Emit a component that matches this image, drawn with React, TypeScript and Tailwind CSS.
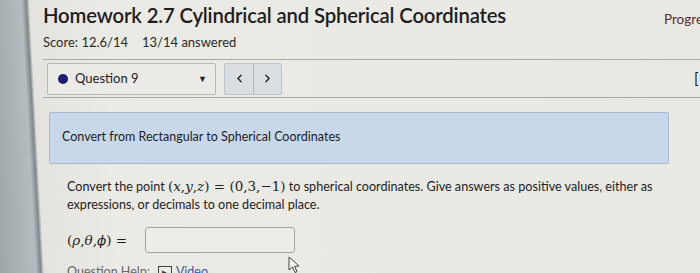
import { ChevronLeft, ChevronRight } from 'lucide-react';

export default function App() {
  return (
    <div className="w-[700px] h-[273px] overflow-hidden bg-[linear-gradient(86.9deg,#9ea6a8_0px,#b4bcbf_36px,#7f878c_41px,#e4e3de_44px,#ebeae5_120px,#e9e8e2_100%)] font-['Lato',sans-serif] text-[#1d1d1f]">
      <div className="pl-[43px] pt-[1px]">
        <div className="flex items-start justify-between">
          <h1 className="text-[20.3px] font-semibold leading-[28px] tracking-[-0.15px]">
            Homework 2.7 Cylindrical and Spherical Coordinates
          </h1>
          <span className="mt-[8px] w-[36px] overflow-hidden whitespace-nowrap text-[13.5px] text-[#5b2a3d]">Progress</span>
        </div>
        <div className="mt-[4px] flex gap-[14px] text-[13px] text-[#2a2a2c]">
          <span>Score: 12.6/14</span>
          <span>13/14 answered</span>
        </div>
        <div className="mt-[6px] h-px bg-[#a9aaa8]" />

        <div className="flex items-center pt-[3px] pb-[2px]">
          <div className="ml-[4px] flex h-[32px] w-[169px] items-center rounded-[2px] border border-[#b8b8b4] bg-[#ebeae6] pl-[10px] pr-[6px]">
            <span className="h-[10px] w-[10px] rounded-full bg-[#1c1f6e]" />
            <span className="ml-[7px] text-[13px]">Question 9</span>
            <span className="ml-auto mr-[2px] text-[9px] text-[#222]">▼</span>
          </div>
          <div className="ml-[8px] flex h-[32px] w-[58px] rounded-[2px] border border-[#bcc4cc] bg-[#d9dee3]">
            <div className="flex w-[29px] items-center justify-center border-r border-[#aeb6bf]">
              <ChevronLeft size={13} strokeWidth={2.4} />
            </div>
            <div className="flex flex-1 items-center justify-center">
              <ChevronRight size={13} strokeWidth={2.4} />
            </div>
          </div>
          <span className="ml-auto w-[6px] overflow-hidden text-[15px] leading-none">[</span>
        </div>
        <div className="h-px bg-[#a9aaa8]" />

        <div className="ml-[6px] mt-[14px] flex h-[52px] w-[620px] items-center rounded-[2px] border border-[#a8b9cf] bg-[#c9d7ea] pl-[12px] text-[12.5px]">
          Convert from Rectangular to Spherical Coordinates
        </div>

        <p className="ml-[24px] mt-[13px] w-[600px] text-[12.6px] leading-[18px] text-[#232325]">
          Convert the point{' '}
          <span className="font-['DejaVu_Serif',serif] text-[13.5px]">
            (<i>x</i>,<i>y</i>,<i>z</i>) = (0,3,−1)
          </span>{' '}
          to spherical coordinates. Give answers as positive values, either as expressions, or decimals to one decimal place.
        </p>

        <div className="ml-[24px] mt-[13px] flex items-center">
          <span className="font-['DejaVu_Serif',serif] text-[13.5px]">
            (<i>ρ</i>,<i>θ</i>,<i>ϕ</i>) =
          </span>
          <div className="ml-[18px] h-[26px] w-[150px] rounded-[3px] border border-[#a3a3a0] bg-[#edece8]" />
        </div>

        <div className="ml-[24px] mt-[10px] flex items-center gap-[8px] text-[12.5px] text-[#666]">
          <span>Question Help:</span>
          <span className="flex items-center gap-[4px] text-[#3a56a8]">
            <span className="flex h-[12px] w-[14px] items-center justify-center border border-[#444] text-[7px] text-[#333]">▶</span>
            Video
          </span>
          <svg className="ml-[72px] -mt-[14px]" width="14" height="18" viewBox="0 0 14 18">
            <path d="M1 1 L1 14 L4.5 11 L7 16.5 L9 15.6 L6.6 10.3 L11 10 Z" fill="#f4f4f2" stroke="#444" strokeWidth="1" />
          </svg>
        </div>
      </div>
    </div>
  );
}
